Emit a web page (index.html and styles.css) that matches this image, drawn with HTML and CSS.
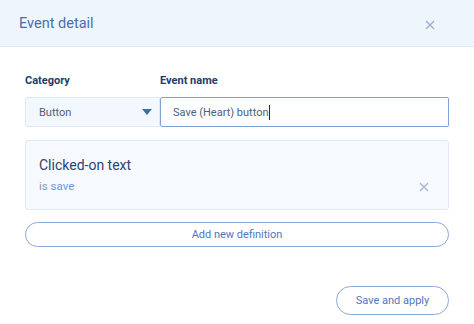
FILE: index.html
```html
<!DOCTYPE html>
<html>
<head>
<meta charset="utf-8">
<link rel="stylesheet" href="styles.css">
</head>
<body>
<div class="dialog">
  <div class="header">
    <span class="title">Event detail</span>
    <svg class="close" width="10" height="10" viewBox="0 0 10 10"><path d="M1 1L9 9M9 1L1 9" stroke="#9aaccc" stroke-width="1.2" fill="none"/></svg>
  </div>
  <div class="body">
    <div class="fields">
      <div class="field cat">
        <div class="label">Category</div>
        <div class="select">
          <span>Button</span>
          <svg class="caret" width="10" height="6" viewBox="0 0 10 6"><path d="M0 0H10L5 6Z" fill="#3d6db5"/></svg>
        </div>
      </div>
      <div class="field name">
        <div class="label">Event name</div>
        <div class="input"><span>Save (Heart) button</span><span class="cursor"></span></div>
      </div>
    </div>
    <div class="card">
      <div class="card-text">
        <div class="card-title">Clicked-on text</div>
        <div class="card-sub"><span class="is">is</span> <span class="val">save</span></div>
      </div>
      <svg class="card-close" width="10" height="10" viewBox="0 0 10 10"><path d="M1 1L9 9M9 1L1 9" stroke="#a3b3cf" stroke-width="1.2" fill="none"/></svg>
    </div>
    <button class="add">Add new definition</button>
    <div class="footer">
      <button class="save">Save and apply</button>
    </div>
  </div>
</div>
</body>
</html>
```
FILE: styles.css
```css
html, body {
  margin: 0;
  padding: 0;
  background: #ffffff;
  font-family: Roboto, "Liberation Sans", sans-serif;
}
.dialog {
  width: 474px;
  height: 324px;
  display: flex;
  flex-direction: column;
}
.header {
  height: 46px;
  background: #eef5fd;
  border-bottom: 1px solid #dfe9f6;
  display: flex;
  align-items: center;
  justify-content: space-between;
  padding: 0 39px 0 19px;
}
.title {
  font-size: 14.5px;
  color: #4a6fa8;
  margin-top: 1px;
}
.close {
  display: block;
  margin-top: 3px;
}
.body {
  padding: 0 25px;
  display: flex;
  flex-direction: column;
}
.fields {
  display: flex;
  margin-top: 26px;
}
.field.cat { width: 135px; }
.field.name { flex: 1; }
.label {
  font-size: 11px;
  font-weight: 700;
  color: #213d6b;
  line-height: 16px;
  margin-bottom: 8px;
}
.select {
  height: 28px;
  background: #f3f8fe;
  border: 1px solid #dfe9f6;
  border-radius: 2px 0 0 2px;
  display: flex;
  align-items: center;
  justify-content: space-between;
  padding: 0 7px 0 13px;
  font-size: 11px;
  color: #4a5f80;
}
.caret { display: block; }
.input {
  height: 28px;
  border: 1px solid #7fa3d8;
  border-radius: 2px;
  background: #ffffff;
  display: flex;
  align-items: center;
  padding: 0 12px;
  font-size: 11px;
  color: #4a5f80;
}
.cursor {
  width: 1px;
  height: 15px;
  background: #1d2b44;
}
.card {
  margin-top: 13px;
  height: 68px;
  background: #f6faff;
  border: 1px solid #e0eaf6;
  border-radius: 3px;
  display: flex;
  align-items: center;
  justify-content: space-between;
  padding: 0 19px 0 13px;
}
.card-text {
  margin-top: -2px;
}
.card-title {
  font-size: 14px;
  color: #2c4470;
  line-height: 20px;
}
.card-sub {
  font-size: 11.5px;
  line-height: 16px;
  margin-top: 3px;
}
.is { color: #8b9ab3; }
.val { color: #6f96d4; }
.card-close {
  display: block;
  margin-top: 24px;
}
.add {
  margin-top: 12px;
  height: 25px;
  border: 1px solid #8ba8db;
  border-radius: 13px;
  background: #ffffff;
  font-family: Roboto, "Liberation Sans", sans-serif;
  font-size: 11px;
  color: #4f76bf;
  padding: 0;
}
.footer {
  display: flex;
  justify-content: flex-end;
  margin-top: 39px;
}
.save {
  width: 113px;
  height: 29px;
  border: 1px solid #8ba8db;
  border-radius: 15px;
  background: #ffffff;
  font-family: Roboto, "Liberation Sans", sans-serif;
  font-size: 11px;
  color: #4f76bf;
  padding: 0;
}
```
